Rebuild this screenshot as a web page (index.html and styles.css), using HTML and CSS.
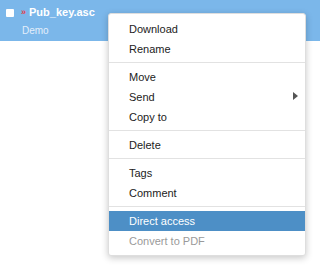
FILE: index.html
```html
<!DOCTYPE html>
<html>
<head>
<meta charset="utf-8">
<link rel="stylesheet" href="styles.css">
</head>
<body>
<div class="page">
  <div class="header">
    <div class="title-row">
      <span class="check"></span>
      <span class="mark">»</span>
      <span class="title">Pub_key.asc</span>
    </div>
    <div class="sub">Demo</div>
  </div>
  <div class="menu">
    <div class="item">Download</div>
    <div class="item">Rename</div>
    <div class="sep"></div>
    <div class="item">Move</div>
    <div class="item has-sub">Send<span class="arrow"></span></div>
    <div class="item">Copy to</div>
    <div class="sep"></div>
    <div class="item">Delete</div>
    <div class="sep"></div>
    <div class="item">Tags</div>
    <div class="item">Comment</div>
    <div class="sep"></div>
    <div class="item active">Direct access</div>
    <div class="item disabled">Convert to PDF</div>
  </div>
</div>
</body>
</html>
```

FILE: styles.css
```css
html, body {
  margin: 0;
  padding: 0;
  background: #ffffff;
}
body {
  font-family: "Liberation Sans", Arial, sans-serif;
  width: 320px;
  height: 268px;
  overflow: hidden;
}
.page {
  position: relative;
  width: 320px;
  height: 268px;
}
.header {
  background: #7bb7ea;
  height: 41px;
  box-sizing: border-box;
  padding: 5px 0 0 6px;
}
.title-row {
  display: flex;
  align-items: center;
  height: 14px;
}
.check {
  width: 8px;
  height: 8px;
  background: #ffffff;
  border-radius: 1px;
  margin-right: 7px;
  margin-top: 2px;
}
.mark {
  color: #e2434f;
  font-size: 9px;
  line-height: 14px;
  margin-right: 3px;
  font-weight: bold;
}
.title {
  color: #ffffff;
  font-size: 11px;
  font-weight: bold;
  line-height: 14px;
}
.sub {
  margin: 5px 0 0 16px;
  color: #e3eefa;
  font-size: 10px;
  line-height: 14px;
}
.menu {
  position: absolute;
  left: 108px;
  top: 13px;
  width: 198px;
  box-sizing: border-box;
  padding: 5px 0 4px 0;
  background: #ffffff;
  border: 1px solid #dedede;
  border-radius: 3px;
  box-shadow: 0 2px 7px rgba(0, 0, 0, 0.22);
}
.item {
  position: relative;
  height: 20px;
  line-height: 20px;
  padding-left: 20px;
  font-size: 11px;
  color: #222222;
}
.item.active {
  background: #4d8fc6;
  color: #ffffff;
}
.item.disabled {
  color: #9a9a9a;
}
.arrow {
  position: absolute;
  right: 7px;
  top: 5px;
  width: 0;
  height: 0;
  border-left: 5px solid #555555;
  border-top: 4px solid transparent;
  border-bottom: 4px solid transparent;
}
.sep {
  height: 1px;
  background: #e2e2e2;
  margin: 3px 0 4px 0;
}
```
